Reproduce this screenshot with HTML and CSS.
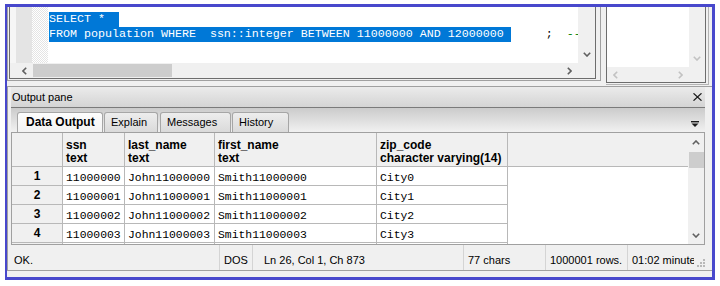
FILE: index.html
```html
<!DOCTYPE html>
<html lang="en">
<head>
    <meta charset="UTF-8">
    <title>Query - Output pane</title>
    <link rel="stylesheet" href="styles.css">
</head>
<body>
    <div class="window">
        <div class="top">
            <div class="editor-frame">
                <div class="editor">
                    <div class="code-area">
                        <div class="margin-pad"></div>
                        <div class="margin-num"></div>
                        <div class="margin-fold"></div>
                        <div class="code">
                            <div class="line"><span class="sel">SELECT * </span></div>
                            <div class="line"><span class="sel">FROM population WHERE  ssn::integer BETWEEN 11000000 AND 12000000</span>     ;  <span class="comment">--</span></div>
                        </div>
                    </div>
                    <div class="vscroll">
                        <div class="sbtn">
                            <svg width="8" height="5" viewBox="0 0 8 5"><path d="M0.8 0.8L4 4L7.2 0.8" class="chev"/></svg>
                        </div>
                    </div>
                    <div class="hscroll">
                        <div class="sbtn">
                            <svg width="5" height="8" viewBox="0 0 5 8"><path d="M4.2 0.8L1 4L4.2 7.2" class="chev"/></svg>
                        </div>
                        <div class="hthumb"></div>
                        <div class="sbtn push">
                            <svg width="5" height="8" viewBox="0 0 5 8"><path d="M0.8 0.8L4 4L0.8 7.2" class="chev"/></svg>
                        </div>
                    </div>
                    <div class="corner"></div>
                </div>
            </div>

            <div class="scratch-frame">
                <div class="scratch">
                    <div class="scratch-text"></div>
                    <div class="vscroll">
                        <div class="sbtn">
                            <svg width="8" height="5" viewBox="0 0 8 5"><path d="M0.8 0.8L4 4L7.2 0.8" class="chev off"/></svg>
                        </div>
                    </div>
                    <div class="hscroll">
                        <div class="sbtn">
                            <svg width="5" height="8" viewBox="0 0 5 8"><path d="M4.2 0.8L1 4L4.2 7.2" class="chev off"/></svg>
                        </div>
                        <div class="sbtn push">
                            <svg width="5" height="8" viewBox="0 0 5 8"><path d="M0.8 0.8L4 4L0.8 7.2" class="chev off"/></svg>
                        </div>
                    </div>
                    <div class="corner"></div>
                </div>
            </div>
        </div>

        <div class="output">
            <div class="pane-title">
                <span>Output pane</span>
                <svg width="9" height="8" viewBox="0 0 9 8"><path d="M0.5 0.3L8.5 7.7M8.5 0.3L0.5 7.7" stroke="#1a1a1a" stroke-width="1.2"/></svg>
            </div>
            <div class="tabstrip">
                <div class="tab active tab-data">Data Output</div>
                <div class="tab tab-explain">Explain</div>
                <div class="tab tab-messages">Messages</div>
                <div class="tab tab-history">History</div>
                <svg class="tab-menu" width="8" height="6" viewBox="0 0 8 6"><rect x="0" y="0" width="8" height="1.4" fill="#1a1a1a"/><path d="M0.5 2.4H7.5L4 6Z" fill="#1a1a1a"/></svg>
            </div>
            <div class="grid-box">
                <div class="grid-scroll">
                    <table class="grid">
                        <colgroup>
                            <col class="c-rh"><col class="c-ssn"><col class="c-last"><col class="c-first"><col class="c-zip"><col>
                        </colgroup>
                        <thead>
                            <tr>
                                <th></th>
                                <th>ssn<br>text</th>
                                <th>last_name<br>text</th>
                                <th>first_name<br>text</th>
                                <th>zip_code<br>character varying(14)</th>
                                <th class="filler"></th>
                            </tr>
                        </thead>
                        <tbody>
                            <tr><td class="rh">1</td><td>11000000</td><td>John11000000</td><td>Smith11000000</td><td>City0</td><td class="filler"></td></tr>
                            <tr><td class="rh">2</td><td>11000001</td><td>John11000001</td><td>Smith11000001</td><td>City1</td><td class="filler"></td></tr>
                            <tr><td class="rh">3</td><td>11000002</td><td>John11000002</td><td>Smith11000002</td><td>City2</td><td class="filler"></td></tr>
                            <tr><td class="rh">4</td><td>11000003</td><td>John11000003</td><td>Smith11000003</td><td>City3</td><td class="filler"></td></tr>
                            <tr><td class="rh"></td><td></td><td></td><td></td><td></td><td class="filler"></td></tr>
                        </tbody>
                    </table>
                </div>
                <div class="grid-vscroll">
                    <div class="sbtn up">
                        <svg width="8" height="5" viewBox="0 0 8 5"><path d="M0.8 4.2L4 1L7.2 4.2" class="chev"/></svg>
                    </div>
                    <div class="vthumb"></div>
                    <div class="sbtn push">
                        <svg width="8" height="5" viewBox="0 0 8 5"><path d="M0.8 0.8L4 4L7.2 0.8" class="chev"/></svg>
                    </div>
                </div>
            </div>
        </div>

        <div class="status">
            <div class="cell st-ok">OK.</div>
            <div class="cell st-dos">DOS</div>
            <div class="cell st-pos">Ln 26, Col 1, Ch 873</div>
            <div class="cell st-chars">77 chars</div>
            <div class="cell st-rows">1000001 rows.</div>
            <div class="cell st-time">01:02 minutes</div>
            <svg class="grip" width="8" height="8" viewBox="0 0 8 8">
                <rect x="6" y="0" width="2" height="2" fill="#b8b8b8"/>
                <rect x="3" y="3" width="2" height="2" fill="#b8b8b8"/>
                <rect x="6" y="3" width="2" height="2" fill="#b8b8b8"/>
                <rect x="0" y="6" width="2" height="2" fill="#b8b8b8"/>
                <rect x="3" y="6" width="2" height="2" fill="#b8b8b8"/>
                <rect x="6" y="6" width="2" height="2" fill="#b8b8b8"/>
            </svg>
        </div>
    </div>
</body>
</html>
```

FILE: styles.css
```css
body {
    margin: 0;
    background: #ffffff;
    font-family: "Liberation Sans", Arial, sans-serif;
    font-size: 11px;
    color: #000000;
}
.window {
    margin: 4px 0 0 5px;
    width: 710px;
    height: 276px;
    box-sizing: border-box;
    border-style: solid;
    border-color: #4848cc;
    border-width: 3px 3px 3px 2px;
    background: #f0f0f0;
    display: flex;
    flex-direction: column;
    overflow: hidden;
}

/* scrollbar bits */
.chev {
    fill: none;
    stroke: #606060;
    stroke-width: 1.6;
}
.chev.off {
    stroke: #c2c2c2;
}
.sbtn {
    width: 17px;
    height: 17px;
    display: flex;
    align-items: center;
    justify-content: center;
    flex: none;
}
.push {
    margin-left: auto;
}
.vscroll {
    background: #f0f0f0;
    display: flex;
    flex-direction: column;
    justify-content: flex-end;
    align-items: center;
}
.hscroll {
    background: #f0f0f0;
    display: flex;
    align-items: center;
}
.corner {
    background: #f0f0f0;
}

/* query editor */
.top {
    height: 78px;
    display: flex;
    align-items: flex-start;
    flex: none;
}
.editor-frame {
    width: 594px;
    box-sizing: border-box;
    border: 1px solid #a0a0a0;
    border-top: 0;
    padding: 0 4px 1px 1px;
}
.editor {
    display: grid;
    grid-template-columns: 1fr 17px;
    grid-template-rows: 56px 15px;
    border: 1px solid #6d6d6d;
    border-top: 0;
}
.editor .hscroll {
    padding-left: 6px;
}
.hthumb {
    width: 139px;
    height: 13px;
    background: #cdcdcd;
}
.code-area {
    display: flex;
    overflow: hidden;
    background: #ffffff;
}
.margin-pad {
    width: 6px;
    background: #f6f6f6;
}
.margin-num {
    width: 16px;
    background: #e4e4e4;
}
.margin-fold {
    width: 16px;
    background-image: repeating-conic-gradient(#e4e4e4 0% 25%, #ffffff 0% 50%);
    background-size: 2px 2px;
}
.code {
    flex: 1;
    min-width: 0;
    padding: 5px 0 0 1px;
    font-family: "Liberation Mono", "Courier New", monospace;
    font-size: 11.67px;
    line-height: 15px;
    overflow: hidden;
}
.line {
    height: 15px;
    white-space: pre;
}
.sel {
    display: inline-block;
    vertical-align: top;
    height: 15px;
    padding-right: 7px;
    background: #0078d7;
    color: #ffffff;
}
.comment {
    color: #008000;
}

/* scratch pad */
.scratch-frame {
    margin-left: 5px;
    padding: 0 2px 1px 0;
    border-right: 1px solid #b4b4b4;
    border-bottom: 1px solid #b4b4b4;
}
.scratch {
    width: 100px;
    box-sizing: border-box;
    display: grid;
    grid-template-columns: 1fr 16px;
    grid-template-rows: 60px 15px;
    border: 1px solid #6d6d6d;
    border-top: 0;
}
.scratch-text {
    background: #ffffff;
}

/* output pane */
.output {
    margin-top: 1px;
    border-top: 1px solid #a0a0a0;
    border-left: 1px solid #a0a0a0;
    padding: 0 7px 0 3px;
    flex: none;
}
.pane-title {
    height: 20px;
    border-bottom: 1px solid #7a7a7a;
    background: linear-gradient(#ebebeb, #d4d4d4);
    display: flex;
    align-items: center;
    justify-content: space-between;
    padding: 0 3px 0 1px;
}
.tabstrip {
    height: 24px;
    background: linear-gradient(#cbcbcb, #f1f1f1);
    display: flex;
    align-items: flex-end;
    padding-left: 6px;
}
.tab {
    height: 18px;
    box-sizing: content-box;
    border: 1px solid #a6a6a6;
    border-bottom: 0;
    border-radius: 3px 3px 0 0;
    background: linear-gradient(#ededed, #dadada);
    display: flex;
    align-items: center;
    padding: 0 0 1px 6px;
    margin-right: 1px;
}
.tab.active {
    background: linear-gradient(#fdfdfd, #f2f2f2);
    font-weight: bold;
    font-size: 12px;
    padding-left: 8px;
}
.tab-data {
    width: 76px;
}
.tab-explain {
    width: 46px;
}
.tab-messages {
    width: 63px;
    margin-left: 1px;
}
.tab-history {
    width: 49px;
}
.tab-menu {
    margin: 0 6px 5px auto;
}

/* data grid */
.grid-box {
    height: 111px;
    border: 1px solid #a0a0a0;
    background: #ffffff;
    display: flex;
}
.grid-scroll {
    flex: 1;
    overflow: hidden;
}
.grid {
    width: 100%;
    table-layout: fixed;
    border-collapse: separate;
    border-spacing: 0;
}
.c-rh { width: 51px; }
.c-ssn { width: 62px; }
.c-last { width: 90px; }
.c-first { width: 162px; }
.c-zip { width: 131px; }
.grid th,
.grid td {
    border-right: 1px solid #b8b8b8;
    border-bottom: 1px solid #b8b8b8;
    padding: 0 0 0 3px;
    text-align: left;
    vertical-align: top;
    white-space: nowrap;
    overflow: hidden;
}
.grid thead tr {
    height: 34px;
}
.grid th {
    background: #f0f0f0;
    font-size: 12px;
    line-height: 13px;
    padding-top: 6px;
}
.grid tbody tr {
    height: 18px;
}
.grid td {
    font-family: "Liberation Mono", "Courier New", monospace;
    font-size: 11.4px;
    line-height: 14px;
    padding-top: 4px;
}
.grid td.rh {
    background: #f0f0f0;
    font-family: "Liberation Sans", Arial, sans-serif;
    font-weight: bold;
    font-size: 12px;
    text-align: center;
    padding: 2px 0 0 0;
}
.grid .filler {
    border-right: 0;
}
.grid td.filler {
    border-bottom: 0;
}
.grid-vscroll {
    width: 16px;
    background: #f0f0f0;
    display: flex;
    flex-direction: column;
    align-items: center;
}
.grid-vscroll .sbtn {
    width: 16px;
}
.grid-vscroll .up {
    height: 19px;
}
.grid-vscroll .push {
    margin-left: 0;
    margin-top: auto;
}
.vthumb {
    width: 15px;
    height: 16px;
    background: #cdcdcd;
}

/* status bar */
.status {
    height: 25px;
    border-left: 1px solid #a0a0a0;
    border-bottom: 1px solid #a0a0a0;
    display: flex;
    align-items: stretch;
    flex: none;
}
.cell {
    box-sizing: border-box;
    border-right: 1px solid #d4d4d4;
    padding: 4px 0 0 4px;
    display: flex;
    align-items: center;
    white-space: nowrap;
    overflow: hidden;
}
.st-ok { width: 212px; padding-left: 6px; }
.st-dos { width: 33px; }
.st-pos { width: 211px; padding-left: 11px; }
.st-chars { width: 82px; }
.st-rows { width: 82px; }
.st-time { width: 66px; border-right: 0; }
.grip {
    margin: auto 0 3px 3px;
}
```
